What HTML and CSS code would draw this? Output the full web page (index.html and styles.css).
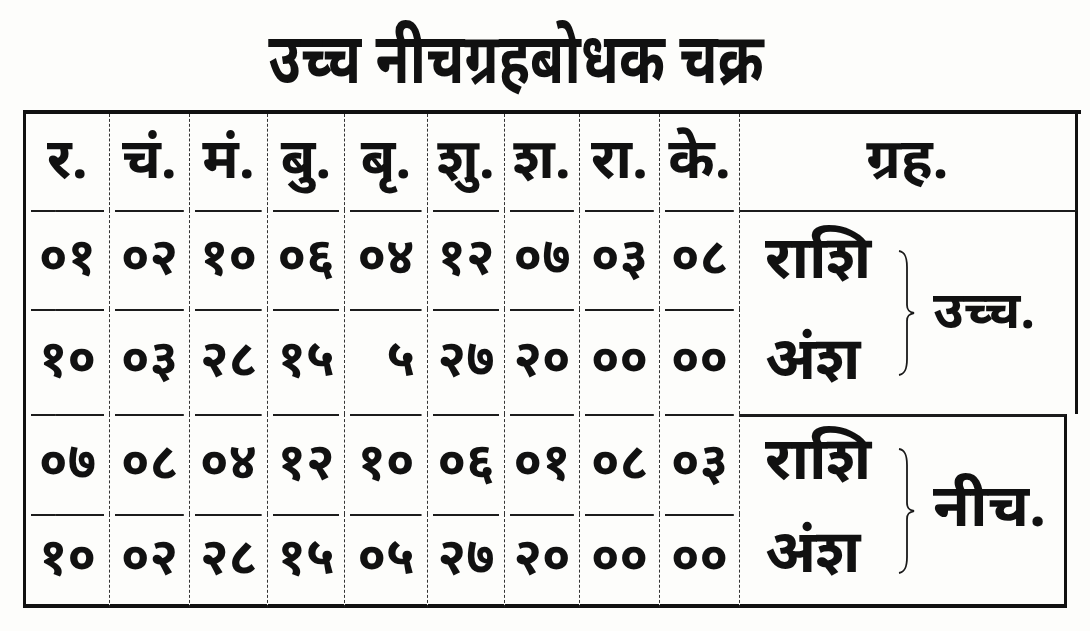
FILE: index.html
```html
<!DOCTYPE html>
<html lang="mr">
<head>
<meta charset="utf-8">
<title>उच्च नीचग्रहबोधक चक्र</title>
<link rel="stylesheet" href="styles.css">
</head>
<body>
<div class="page">
  <h1 class="title"><span class="title-text">उच्च नीचग्रहबोधक चक्र</span></h1>
  <div class="chart">
    <div class="head c">र.</div>
    <div class="head c">चं.</div>
    <div class="head c">मं.</div>
    <div class="head c">बु.</div>
    <div class="head c">बृ.</div>
    <div class="head c">शु.</div>
    <div class="head c">श.</div>
    <div class="head c">रा.</div>
    <div class="head c">के.</div>
    <div class="head side">ग्रह.</div>

    <div class="num c">०१</div>
    <div class="num c">०२</div>
    <div class="num c">१०</div>
    <div class="num c">०६</div>
    <div class="num c">०४</div>
    <div class="num c">१२</div>
    <div class="num c">०७</div>
    <div class="num c">०३</div>
    <div class="num c">०८</div>
    <div class="group g1">
      <div class="names"><span>राशि</span><span>अंश</span></div>
      <svg class="brace" viewBox="0 0 18 128" width="18" height="128"><path d="M2 2 C8 3 10 8 10 18 L10 56 C10 61 12 63 17 64 C12 65 10 67 10 72 L10 110 C10 120 8 125 2 126" fill="none" stroke="#1a1a1a" stroke-width="1.8"/></svg>
      <div class="label">उच्च.</div>
    </div>
    <div class="num c">१०</div>
    <div class="num c">०३</div>
    <div class="num c">२८</div>
    <div class="num c">१५</div>
    <div class="num c r">५</div>
    <div class="num c">२७</div>
    <div class="num c">२०</div>
    <div class="num c">००</div>
    <div class="num c">००</div>

    <div class="num c">०७</div>
    <div class="num c">०८</div>
    <div class="num c">०४</div>
    <div class="num c">१२</div>
    <div class="num c">१०</div>
    <div class="num c">०६</div>
    <div class="num c">०१</div>
    <div class="num c">०८</div>
    <div class="num c">०३</div>
    <div class="group g2">
      <div class="names"><span>राशि</span><span>अंश</span></div>
      <svg class="brace" viewBox="0 0 18 128" width="18" height="128"><path d="M2 2 C8 3 10 8 10 18 L10 56 C10 61 12 63 17 64 C12 65 10 67 10 72 L10 110 C10 120 8 125 2 126" fill="none" stroke="#1a1a1a" stroke-width="1.8"/></svg>
      <div class="label big">नीच.</div>
    </div>
    <div class="num c last">१०</div>
    <div class="num c last">०२</div>
    <div class="num c last">२८</div>
    <div class="num c last">१५</div>
    <div class="num c last">०५</div>
    <div class="num c last">२७</div>
    <div class="num c last">२०</div>
    <div class="num c last">००</div>
    <div class="num c last">००</div>
  </div>
</div>
</body>
</html>
```

FILE: styles.css
```css
html, body {
  margin: 0;
  padding: 0;
  background: #fdfdfb;
}
body {
  width: 1090px;
  height: 631px;
  overflow: hidden;
  font-family: "Noto Sans Devanagari", "Noto Serif Devanagari", "Lohit Devanagari", "Noto Sans", sans-serif;
  color: #111;
}
.page {
  padding: 0 12px 0 23px;
}
.title {
  margin: 0;
  height: 110px;
  box-sizing: border-box;
  padding: 26px 70px 0 0;
  text-align: center;
  font-size: 66px;
  font-weight: 700;
  line-height: 80px;
}
.title-text {
  display: inline-block;
  transform: scale(0.84, 1.06);
}
.chart {
  display: grid;
  grid-template-columns: 84px 80px 78px 77px 83px 77px 75px 80px 80px 338px;
  grid-template-rows: 96px 99px 105px 100px 94px;
  border-left: 3px solid #111;
  border-top: 4px solid #111;
  width: 1055px;
}
.c {
  box-sizing: border-box;
  border-right: 1px dashed #333;
  display: flex;
  align-items: center;
  justify-content: center;
  font-weight: 700;
}
.head {
  font-size: 56px;
  padding-top: 4px;
}
.head.side {
  box-sizing: border-box;
  border-right: 3px solid #111;
  display: flex;
  align-items: center;
  justify-content: center;
  font-weight: 700;
}
.num {
  font-size: 51px;
  padding-top: 4px;
  background-image: linear-gradient(#1c1c1c, #1c1c1c), linear-gradient(#1c1c1c, #1c1c1c);
  background-size: 30% 2px, 58% 2px;
  background-position: left 5px top 0, right 5px top 0;
  background-repeat: no-repeat;
}
.num.r {
  justify-content: flex-end;
  padding-right: 12px;
}
.num.last {
  border-bottom: 4px solid #111;
}
.group {
  box-sizing: border-box;
  grid-column: 10;
  display: flex;
  align-items: stretch;
  padding-left: 25px;
  border-right: 3px solid #111;
  border-top: 2px solid #1c1c1c;
}
.g1 {
  grid-row: 2 / 4;
}
.g2 {
  grid-row: 4 / 6;
  margin-right: 11px;
  border-top: 3px solid #1c1c1c;
  border-bottom: 4px solid #111;
}
.names {
  display: flex;
  flex-direction: column;
  width: 110px;
  font-size: 60px;
  font-weight: 700;
  line-height: 1;
}
.names span {
  flex: 1;
  display: flex;
  align-items: center;
}
.brace {
  align-self: center;
  margin-left: 22px;
}
.label {
  align-self: center;
  font-size: 52px;
  font-weight: 700;
  margin-left: 18px;
  padding-top: 4px;
}
.label.big {
  font-size: 60px;
  padding-top: 0;
}
```
